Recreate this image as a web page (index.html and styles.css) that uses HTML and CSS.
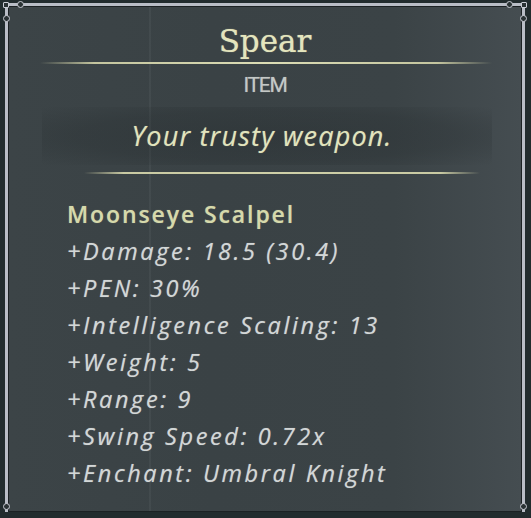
FILE: index.html
```html
<!DOCTYPE html>
<html>
<head>
<meta charset="utf-8">
<link rel="stylesheet" href="styles.css">
</head>
<body>
<div class="frame">
  <span class="knob k-tl"></span>
  <span class="knob k-tl2"></span>
  <span class="knob k-tl3"></span>
  <span class="knob k-tr"></span>
  <span class="knob k-tr2"></span>
  <span class="knob k-tr3"></span>
  <span class="knob k-bl"></span>
  <span class="knob k-br"></span>
  <div class="panel">
    <h1 class="title">Spear</h1>
    <div class="rule rule-top"></div>
    <div class="kind">ITEM</div>
    <div class="desc-band">
      <p class="desc">Your trusty weapon.</p>
    </div>
    <div class="rule rule-mid"></div>
    <ul class="stats">
      <li class="stat-name">Moonseye Scalpel</li>
      <li>+Damage: 18.5 (30.4)</li>
      <li>+PEN: 30%</li>
      <li>+Intelligence Scaling: 13</li>
      <li>+Weight: 5</li>
      <li>+Range: 9</li>
      <li>+Swing Speed: 0.72x</li>
      <li>+Enchant: Umbral Knight</li>
    </ul>
  </div>
</div>
</body>
</html>
```

FILE: styles.css
```css
html, body {
  margin: 0;
  padding: 0;
}
body {
  width: 531px;
  height: 518px;
  overflow: hidden;
  background: #222c2e;
}
.frame {
  position: relative;
  margin: 3px 0 0 5px;
  width: 520px;
  height: 509px;
  box-sizing: border-box;
  border: 3px solid #b9bdc6;
  border-bottom: none;
  box-shadow: inset 0 0 0 1px #1c2224;
  background:
    linear-gradient(90deg, transparent 141px, rgba(255,255,255,0.045) 141px, rgba(255,255,255,0.045) 143px, transparent 143px),
    linear-gradient(90deg, #3c4447 0%, #3a4245 40%, #3b4346 75%, #454d51 100%);
}
.knob {
  position: absolute;
  width: 5px;
  height: 5px;
  border: 1px solid #c9ccd4;
  border-radius: 50%;
  background: #2a3234;
}
.k-tl { left: -5px; top: -4px; border-radius: 1px; width: 4px; height: 4px; }
.k-tl2 { left: 9px; top: -5px; }
.k-tl3 { left: -5px; top: 9px; }
.k-tr { right: -5px; top: -4px; border-radius: 1px; width: 4px; height: 4px; }
.k-tr2 { right: 9px; top: -5px; }
.k-tr3 { right: -5px; top: 9px; }
.k-bl { left: -5px; bottom: 2px; }
.k-br { right: -5px; bottom: 2px; }

.panel {
  display: flex;
  flex-direction: column;
  align-items: stretch;
  padding-top: 17px;
}
.title {
  margin: 0;
  text-align: center;
  font-family: "DejaVu Serif", serif;
  font-weight: normal;
  font-size: 31px;
  line-height: 36px;
  color: #e4e5bd;
  text-shadow: 0 0 1px rgba(228,229,189,0.7);
}
.rule {
  height: 2px;
}
.rule-top {
  margin: 3px 30px 0 32px;
  background: linear-gradient(90deg, rgba(214,214,174,0) 0%, #c4c59f 12%, #dcddb5 50%, #c4c59f 88%, rgba(214,214,174,0) 100%);
}
.kind {
  margin-top: 9px;
  text-align: center;
  font-family: "Roboto", sans-serif;
  font-size: 21px;
  line-height: 24px;
  letter-spacing: -1.3px;
  color: #c4c8c6;
  text-shadow: 0 0 1px rgba(196,200,198,0.6);
}
.desc-band {
  margin: 10px 30px 0 34px;
  height: 58px;
  display: flex;
  align-items: center;
  justify-content: center;
  background: radial-gradient(ellipse at center, rgba(30,36,38,0.32) 0%, rgba(30,36,38,0.22) 60%, rgba(30,36,38,0) 100%);
}
.desc {
  margin: 0 10px 0 0;
  font-family: "Open Sans", sans-serif;
  font-style: italic;
  font-size: 27px;
  line-height: 30px;
  letter-spacing: 1.2px;
  color: #e2e4bd;
  text-shadow: 0 0 1px rgba(226,228,189,0.5);
}
.rule-mid {
  margin: 7px 42px 0 76px;
  background: linear-gradient(90deg, rgba(214,214,174,0) 0%, #c9caa3 10%, #cfd0a8 50%, #c9caa3 90%, rgba(214,214,174,0) 100%);
}
.stats {
  list-style: none;
  margin: 22px 0 0 0;
  padding: 0 0 0 59px;
  font-family: "Open Sans", sans-serif;
  font-style: italic;
  font-size: 23.5px;
  line-height: 37px;
  letter-spacing: 2.6px;
  color: #d3d7d7;
  text-shadow: 0 0 1px rgba(211,215,215,0.55);
}
.stat-name {
  font-style: normal;
  font-weight: 600;
  font-size: 23px;
  letter-spacing: 1.9px;
  color: #d6d9ab;
  text-shadow: 0 0 1px rgba(214,217,171,0.5);
}
```
